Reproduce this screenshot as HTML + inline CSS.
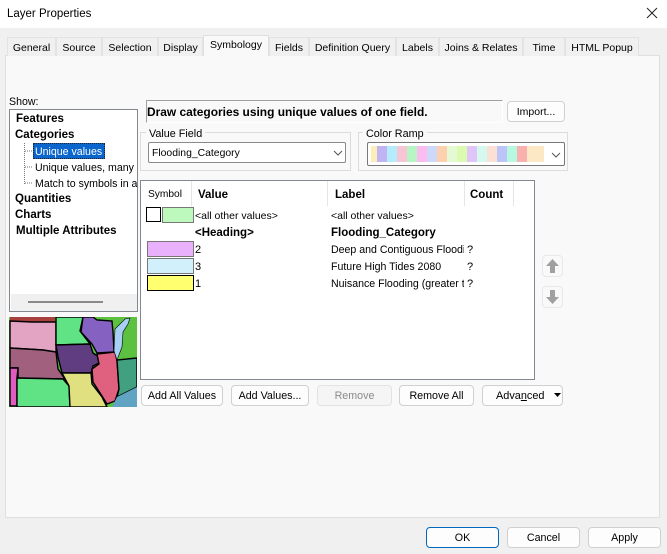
<!DOCTYPE html>
<html><head><meta charset="utf-8"><style>
html,body{margin:0;padding:0}
body{width:667px;height:554px;position:relative;overflow:hidden;background:#f0f0f0;font:12px "Liberation Sans",sans-serif;color:#000}
.a{position:absolute;box-sizing:border-box}
.t{position:absolute;white-space:nowrap;line-height:14px;font-size:10.6px}
.b{font-weight:bold;font-size:11.5px}
.tab{position:absolute;box-sizing:border-box;top:37px;height:19px;background:#f0f0f0;border:1px solid #e3e3e3;border-bottom:none;text-align:center;line-height:20px;font-size:10.5px;white-space:nowrap}
.btn{position:absolute;box-sizing:border-box;background:#fdfdfd;border:1px solid #d0d0d0;border-radius:4px;text-align:center;font-size:10.7px;line-height:20px;white-space:nowrap}
.s{position:absolute;box-sizing:border-box;height:17px;border:1px solid #777}
</style></head><body>
<div class="a" style="left:0;top:0;width:667px;height:28px;background:#fff"></div>
<div class="t" style="left:7px;top:7px;font-size:11.5px">Layer Properties</div>
<svg class="a" style="left:645px;top:6px" width="14" height="14"><path d="M2 2L12 12M12 2L2 12" stroke="#222" stroke-width="1" fill="none"/></svg>

<div class="a" style="left:5px;top:55px;width:655px;height:463px;background:#f9f9f9;border:1px solid #dfdfdf"></div>
<div class="tab" style="left:7px;width:49px">General</div>
<div class="tab" style="left:56px;width:46px">Source</div>
<div class="tab" style="left:102px;width:56px">Selection</div>
<div class="tab" style="left:158px;width:45px">Display</div>
<div class="tab" style="left:203px;top:35px;height:21px;width:66px;background:#f9f9f9;border-color:#dfdfdf;line-height:19px;z-index:2">Symbology</div>
<div class="tab" style="left:269px;width:40px">Fields</div>
<div class="tab" style="left:309px;width:87px">Definition Query</div>
<div class="tab" style="left:396px;width:43px">Labels</div>
<div class="tab" style="left:439px;width:84px">Joins &amp; Relates</div>
<div class="tab" style="left:523px;width:42px">Time</div>
<div class="tab" style="left:565px;width:74px">HTML Popup</div>

<div class="t" style="left:9px;top:95px">Show:</div>
<div class="a" style="left:9px;top:109px;width:129px;height:203px;background:#fff;border:1px solid #828790;overflow:hidden">
  <div class="t b" style="left:6px;top:2px">Features</div>
  <div class="t b" style="left:5px;top:18px">Categories</div>
  <svg class="a" style="left:0;top:0" width="40" height="80"><path d="M14.5 33V74M15 41H23M15 57H23M15 73H23" stroke="#777" stroke-dasharray="1 1" fill="none"/></svg>
  <div class="a" style="left:23px;top:33px;width:72px;height:16px;background:#0a66cc;border:1px dotted #222"></div>
  <div class="t" style="left:25px;top:35px;color:#fff">Unique values</div>
  <div class="t" style="left:25px;top:51px">Unique values, many</div>
  <div class="t" style="left:25px;top:67px;width:102px;overflow:hidden">Match to symbols in a</div>
  <div class="t b" style="left:5px;top:82px">Quantities</div>
  <div class="t b" style="left:5px;top:98px">Charts</div>
  <div class="t b" style="left:6px;top:114px">Multiple Attributes</div>
  <div class="a" style="left:1px;top:184px;width:126px;height:17px;background:#f0f0f0"></div>
  <div class="a" style="left:18px;top:191px;width:75px;height:2px;background:#8a8a8a"></div>
</div>

<svg class="a" style="left:9px;top:317px" width="128" height="90" viewBox="0 0 128 90">
<rect width="128" height="90" fill="#5cc040"/>
<g stroke="#000" stroke-width="1.4">
<polygon points="1,0 46,0 46,5 23,5 1,4" fill="#a84040" stroke="none"/>
<polygon points="1,4 23,5 47,5 47,35 34,33 1,31" fill="#e3a3c3"/>
<polygon points="1,31 34,33 47,35 49,52 56,62 9,61 9,51 1,51" fill="#a0607e"/>
<polygon points="1,51 9,51 8,61 8,89 1,89" fill="#e05cc0"/>
<polygon points="8,61 54,62 60,69 61,90 8,90" fill="#5fe384"/>
<polygon points="47,0 74,0 71,14 81,27 47,28" fill="#5fe384"/>
<polygon points="74,0 84,0 88,3 103,4 104,15 105,35 88,36 83,27 72,15" fill="#8561c2"/>
<polygon points="47,28 81,27 84,36 90,40 90,46 84,49 82,56 53,56 49,40" fill="#5f3d80"/>
<polygon points="88,37 106,35 108,44 110,72 106,84 98,87 93,79 84,65 83,52 90,47" fill="#e06080"/>
<polygon points="53,56 82,56 83,67 93,80 98,90 61,90 60,69" fill="#e0e080"/>
<polygon points="123,2 128,4 128,41 108,43 113,29 114,15" fill="#5cc040" stroke="none"/>
<polygon points="106,12 116,2 121,1 119,7 114,15 113,30 108,43 105,34" fill="#a8d0f5" stroke="#000" stroke-width="0.6"/>
<polygon points="108,43 128,41 128,70 108,80 110,72" fill="#40a080"/>
<polygon points="103,90 108,80 128,70 128,90" fill="#60a3c3" stroke="none"/>
</g>
</svg>

<div class="a" style="left:146px;top:100px;width:357px;height:23px;border-top:1px solid #a0a0a0;border-left:1px solid #a0a0a0;border-right:1px solid #fff;border-bottom:1px solid #fff"></div>
<div class="t b" style="left:147px;top:105px;font-size:11.95px">Draw categories using unique values of one field.</div>
<div class="btn" style="left:507px;top:101px;width:58px;height:21px;font-size:10.5px">Import...</div>

<div class="a" style="left:140px;top:132px;width:211px;height:39px;border:1px solid #dcdcdc"></div>
<div class="t" style="left:146px;top:127px;background:#f9f9f9;padding:0 3px;font-size:10.8px">Value Field</div>
<div class="a" style="left:148px;top:142px;width:198px;height:21px;background:#fff;border:1px solid #8a8a8a;border-radius:2px"></div>
<div class="t" style="left:152px;top:147px;font-size:10.4px">Flooding_Category</div>
<svg class="a" style="left:333px;top:150px" width="10" height="6"><path d="M1 1L5 5L9 1" stroke="#555" fill="none"/></svg>

<div class="a" style="left:358px;top:132px;width:210px;height:39px;border:1px solid #dcdcdc"></div>
<div class="t" style="left:363px;top:127px;background:#f9f9f9;padding:0 3px;font-size:10.8px">Color Ramp</div>
<div class="a" style="left:367px;top:142px;width:198px;height:24px;background:#fff;border:1px solid #777;border-radius:2px"></div>
<svg class="a" style="left:371px;top:146px" width="174" height="16"><g>
<rect x="0" width="7" height="16" fill="#fbeeb8"/><rect x="6" width="10" height="16" fill="#c0b4f5"/><rect x="16" width="10" height="16" fill="#b4ecfb"/><rect x="26" width="10" height="16" fill="#f8c5d5"/><rect x="36" width="10" height="16" fill="#b7f5c5"/><rect x="46" width="10" height="16" fill="#fbbdf0"/><rect x="56" width="10" height="16" fill="#ccd9f8"/><rect x="66" width="10" height="16" fill="#fdd0b0"/><rect x="76" width="10" height="16" fill="#e5f9d5"/><rect x="86" width="10" height="16" fill="#ddfbb0"/><rect x="96" width="10" height="16" fill="#e0c5f8"/><rect x="106" width="10" height="16" fill="#d5f9ee"/><rect x="116" width="10" height="16" fill="#fde0d5"/><rect x="126" width="10" height="16" fill="#bcc5f8"/><rect x="136" width="10" height="16" fill="#b7f8e0"/><rect x="146" width="10" height="16" fill="#fbb0b0"/><rect x="156" width="17" height="16" fill="#fde8c5"/></g></svg>
<svg class="a" style="left:551px;top:152px" width="10" height="6"><path d="M1 1L5 5L9 1" stroke="#555" fill="none"/></svg>

<div class="a" style="left:140px;top:180px;width:395px;height:200px;background:#fff;border:1px solid #828790"></div>
<div class="a" style="left:191px;top:181px;width:1px;height:25px;background:#e5e5e5"></div>
<div class="a" style="left:327px;top:181px;width:1px;height:25px;background:#e5e5e5"></div>
<div class="a" style="left:464px;top:181px;width:1px;height:25px;background:#e5e5e5"></div>
<div class="a" style="left:513px;top:181px;width:1px;height:25px;background:#e5e5e5"></div>
<div class="t" style="left:148px;top:188px;font-size:10.2px">Symbol</div>
<div class="t b" style="left:198px;top:188px">Value</div>
<div class="t b" style="left:335px;top:188px">Label</div>
<div class="t b" style="left:470px;top:188px">Count</div>

<div class="a" style="left:146px;top:207px;width:15px;height:15px;background:#fff;border:1px solid #000"></div>
<div class="s" style="left:162px;top:207px;width:32px;height:16px;background:#bdf8bd"></div>
<div class="s" style="left:147px;top:241px;width:47px;height:16px;background:#e9b0fb"></div>
<div class="s" style="left:147px;top:258px;width:47px;height:16px;background:#d2f0fb"></div>
<div class="s" style="left:147px;top:275px;width:47px;height:16px;background:#ffff70;border-color:#000"></div>

<div class="t" style="left:195px;top:209px;font-size:10.5px">&lt;all other values&gt;</div>
<div class="t b" style="left:195px;top:226px">&lt;Heading&gt;</div>
<div class="t" style="left:195px;top:243px;font-size:11px">2</div>
<div class="t" style="left:195px;top:260px;font-size:11px">3</div>
<div class="t" style="left:195px;top:277px;font-size:11px">1</div>
<div class="t" style="left:331px;top:209px;font-size:10.5px">&lt;all other values&gt;</div>
<div class="t b" style="left:331px;top:226px">Flooding_Category</div>
<div class="t" style="left:331px;top:243px;width:133px;overflow:hidden">Deep and Contiguous Flooding</div>
<div class="t" style="left:331px;top:260px">Future High Tides 2080</div>
<div class="t" style="left:331px;top:277px;width:133px;overflow:hidden">Nuisance Flooding (greater than</div>
<div class="t" style="left:467px;top:243px;font-size:11px">?</div>
<div class="t" style="left:467px;top:260px;font-size:11px">?</div>
<div class="t" style="left:467px;top:277px;font-size:11px">?</div>

<div class="a" style="left:542px;top:255px;width:21px;height:22px;border:1px solid #e8e8e8;border-radius:4px"></div>
<svg class="a" style="left:545px;top:258px" width="15" height="16"><path d="M7.5 1L14 8H10V15H5V8H1Z" fill="#a0a0a0"/></svg>
<div class="a" style="left:542px;top:286px;width:21px;height:22px;border:1px solid #e8e8e8;border-radius:4px"></div>
<svg class="a" style="left:545px;top:289px" width="15" height="16"><path d="M5 1H10V8H14L7.5 15L1 8H5Z" fill="#a0a0a0"/></svg>

<div class="btn" style="left:141px;top:385px;width:82px;height:21px">Add All Values</div>
<div class="btn" style="left:231px;top:385px;width:78px;height:21px">Add Values...</div>
<div class="btn" style="left:317px;top:385px;width:75px;height:21px;background:#f5f5f5;border-color:#e3e3e3;color:#8a8a8a">Remove</div>
<div class="btn" style="left:399px;top:385px;width:75px;height:21px">Remove All</div>
<div class="btn" style="left:482px;top:385px;width:81px;height:21px;text-align:left;padding-left:13px;font-size:10.9px">Adva<u>n</u>ced</div>
<svg class="a" style="left:554px;top:393px" width="7" height="4"><path d="M0 0H7L3.5 4Z" fill="#000"/></svg>

<div class="btn" style="left:426px;top:527px;width:73px;height:21px;border-color:#0067c0">OK</div>
<div class="btn" style="left:507px;top:527px;width:73px;height:21px">Cancel</div>
<div class="btn" style="left:588px;top:527px;width:73px;height:21px">Apply</div>
</body></html>
